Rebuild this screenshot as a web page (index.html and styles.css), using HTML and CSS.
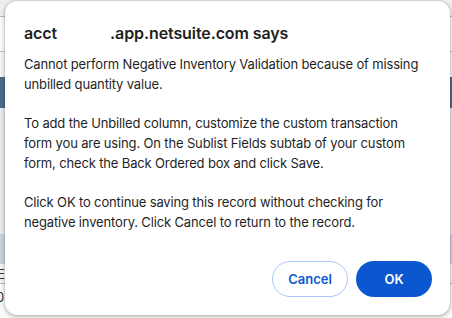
FILE: index.html
```html
<!DOCTYPE html>
<html>
<head>
<meta charset="utf-8">
<link rel="stylesheet" href="styles.css">
</head>
<body>
<div class="page">
  <div class="band b-top"></div>
  <div class="band b-white"></div>
  <div class="band b-white2"></div>
  <div class="band b-blue"></div>
  <div class="band b-gray"></div>
  <div class="band b-lightblue"></div>
  <div class="band b-e">E</div>
  <div class="band b-zero">0</div>
</div>
<div class="dialog">
  <div class="title">acct<span class="redact"></span>.app.netsuite.com says</div>
  <div class="message">
    <p>Cannot perform Negative Inventory Validation because of missing unbilled quantity value.</p>
    <p>To add the Unbilled column, customize the custom transaction form you are using. On the Sublist Fields subtab of your custom form, check the Back Ordered box and click Save.</p>
    <p>Click OK to continue saving this record without checking for negative inventory. Click Cancel to return to the record.</p>
  </div>
  <div class="actions">
    <button class="btn btn-cancel">Cancel</button>
    <button class="btn btn-ok">OK</button>
  </div>
</div>
</body>
</html>
```

FILE: styles.css
```css
html, body {
  margin: 0;
  padding: 0;
  width: 452px;
  height: 318px;
  overflow: hidden;
  background: #ffffff;
  font-family: Inter, "Liberation Sans", Arial, sans-serif;
}
.page {
  display: flex;
  flex-direction: column;
  width: 452px;
  height: 318px;
}
.band { width: 100%; box-sizing: border-box; }
.b-top { height: 17px; background: #eeeeee; border-bottom: 1px solid #b8b8b8; }
.b-white { height: 35px; background: #fafafa; border-bottom: 1px solid #c4c4c4; }
.b-white2 { height: 25px; background: #f4f4f4; }
.b-blue { height: 31px; background: #4d6a8c; }
.b-gray { height: 126px; background: #e6e8eb; }
.b-lightblue { height: 30px; background: #c9d1dc; }
.b-e { height: 20px; background: #f4f4f4; border-bottom: 1px solid #b8b8b8; font-size: 13px; line-height: 20px; color: #333; padding-left: 0; text-indent: -3px; }
.b-zero { flex: 1; background: #fafafa; font-size: 13px; line-height: 26px; color: #333; text-indent: -4px; }

.dialog {
  position: absolute;
  left: 5px;
  top: 1px;
  width: 445px;
  height: 314px;
  box-sizing: border-box;
  background: #ffffff;
  border-radius: 12px;
  box-shadow: 0 1px 4px rgba(0,0,0,0.35), 0 0 1px rgba(0,0,0,0.2);
  padding: 22px 18px 18px 19px;
  display: flex;
  flex-direction: column;
}
.title {
  font-size: 16px;
  font-weight: 600;
  line-height: 20px;
  color: #1f1f1f;
  white-space: nowrap;
  letter-spacing: -0.1px;
}
.redact {
  display: inline-block;
  width: 53px;
  height: 1px;
}
.message {
  margin-top: 12px;
  margin-right: 11px;
  font-size: 13px;
  line-height: 19.7px;
  letter-spacing: -0.15px;
  color: #1f1f1f;
}
.message p { margin: 0 0 19.7px 0; }
.message p:last-child { margin-bottom: 0; }
.actions {
  margin-top: auto;
  display: flex;
  justify-content: flex-end;
  gap: 8px;
}
.btn {
  width: 76px;
  height: 36px;
  border-radius: 18px;
  font-family: inherit;
  font-size: 13px;
  font-weight: 600;
  box-sizing: border-box;
  cursor: pointer;
}
.btn-cancel {
  background: #ffffff;
  border: 1px solid #a8c7fa;
  color: #0b57d0;
}
.btn-ok {
  background: #0b57d0;
  border: none;
  color: #ffffff;
}
```
